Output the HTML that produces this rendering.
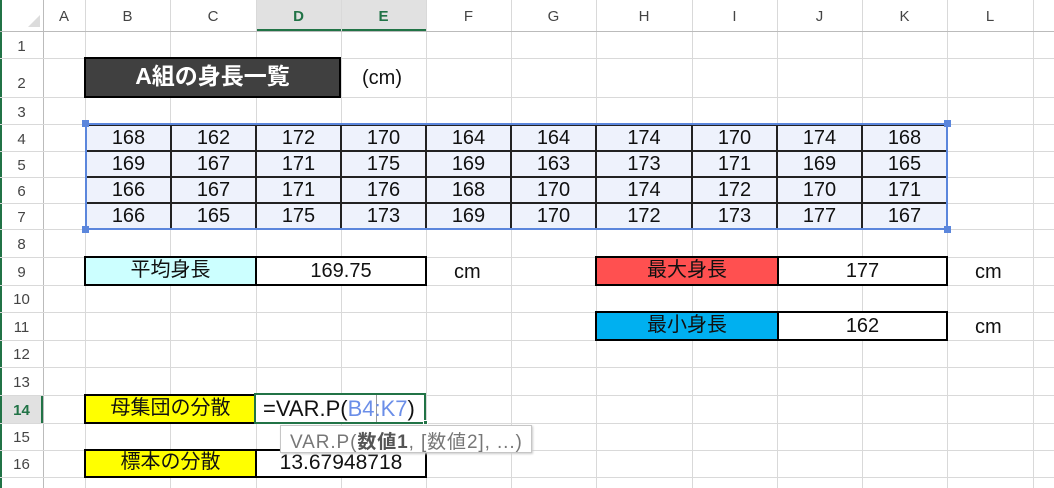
<!DOCTYPE html>
<html><head><meta charset="utf-8"><style>
*{margin:0;padding:0;box-sizing:border-box}
body{width:1054px;height:488px;overflow:hidden;background:#fff;position:relative;font-family:"Liberation Sans","Noto Sans CJK JP",sans-serif;color:#111}
.a{position:absolute}
.v{position:absolute;top:0;width:1px;height:488px;background:#d9d9d9}
.h{position:absolute;left:0;height:1px;width:1054px;background:#d9d9d9}
.ch{position:absolute;top:0;height:31px;text-align:center;line-height:34px;font-size:15px;color:#444}
.rh{position:absolute;left:0;width:43px;text-align:center;font-size:15px;color:#444;padding-left:0}
.box{position:absolute;border:2px solid #000;display:flex;align-items:center;justify-content:center;font-size:20px;line-height:24px}
.j{padding-bottom:3px}
table{position:absolute;left:85px;top:124px;border-collapse:collapse;background:#eef2fc}
td{border:2px solid #222;width:85px;height:26px;text-align:center;font-size:20px;line-height:22px;padding:0}
</style></head><body>
<div class="a" style="left:0;top:0;width:1054px;height:31px;background:#fff"></div>
<div class="a" style="left:256px;top:0;width:170px;height:31px;background:#e1e1e1"></div>
<div class="a" style="left:256px;top:29px;width:170px;height:2px;background:#217346"></div>
<div class="a" style="left:0;top:395px;width:43px;height:28px;background:#e1e1e1"></div>
<div class="a" style="left:41px;top:395px;width:2px;height:28px;background:#217346"></div>
<div class="a" style="left:0;top:0;width:2px;height:488px;background:#217346"></div>
<div class="v" style="left:43px;background:#bbb"></div>
<div class="v" style="left:85px"></div><div class="v" style="left:170px"></div><div class="v" style="left:256px"></div><div class="v" style="left:341px"></div><div class="v" style="left:426px"></div><div class="v" style="left:511px"></div><div class="v" style="left:596px"></div><div class="v" style="left:692px"></div><div class="v" style="left:777px"></div><div class="v" style="left:862px"></div><div class="v" style="left:947px"></div><div class="v" style="left:1033px"></div>
<div class="h" style="top:31px;background:#bbb"></div>
<div class="h" style="top:58px"></div><div class="h" style="top:97px"></div><div class="h" style="top:124px"></div><div class="h" style="top:151px"></div><div class="h" style="top:177px"></div><div class="h" style="top:203px"></div><div class="h" style="top:229px"></div><div class="h" style="top:257px"></div><div class="h" style="top:285px"></div><div class="h" style="top:312px"></div><div class="h" style="top:340px"></div><div class="h" style="top:367px"></div><div class="h" style="top:395px"></div><div class="h" style="top:423px"></div><div class="h" style="top:450px"></div><div class="h" style="top:477px"></div>
<div class="a" style="left:28px;top:15px;width:0;height:0;border-left:12px solid transparent;border-bottom:12px solid #dcdcdc"></div>
<div class="ch" style="left:43px;width:42px">A</div><div class="ch" style="left:85px;width:85px">B</div><div class="ch" style="left:170px;width:86px">C</div><div class="ch" style="left:256px;width:85px;color:#217346;font-weight:bold">D</div><div class="ch" style="left:341px;width:85px;color:#217346;font-weight:bold">E</div><div class="ch" style="left:426px;width:85px">F</div><div class="ch" style="left:511px;width:85px">G</div><div class="ch" style="left:596px;width:96px">H</div><div class="ch" style="left:692px;width:85px">I</div><div class="ch" style="left:777px;width:85px">J</div><div class="ch" style="left:862px;width:85px">K</div><div class="ch" style="left:947px;width:86px">L</div>
<div class="rh" style="top:38px">1</div><div class="rh" style="top:75px">2</div><div class="rh" style="top:104px">3</div><div class="rh" style="top:131px">4</div><div class="rh" style="top:157px">5</div><div class="rh" style="top:183px">6</div><div class="rh" style="top:209px">7</div><div class="rh" style="top:236px">8</div><div class="rh" style="top:264px">9</div><div class="rh" style="top:291px">10</div><div class="rh" style="top:319px">11</div><div class="rh" style="top:346px">12</div><div class="rh" style="top:374px">13</div><div class="rh" style="top:402px;color:#217346;font-weight:bold">14</div><div class="rh" style="top:429px">15</div><div class="rh" style="top:456px">16</div>
<div class="box j" style="left:84px;top:57px;width:257px;height:41px;background:#404040;color:#fff;font-weight:bold;font-size:23px">A組の身長一覧</div>
<div class="a" style="left:362px;top:67px;font-size:20px">(cm)</div>
<table>
<tr><td>168</td><td>162</td><td>172</td><td>170</td><td>164</td><td>164</td><td style="width:96px">174</td><td>170</td><td>174</td><td>168</td></tr>
<tr><td>169</td><td>167</td><td>171</td><td>175</td><td>169</td><td>163</td><td style="width:96px">173</td><td>171</td><td>169</td><td>165</td></tr>
<tr><td>166</td><td>167</td><td>171</td><td>176</td><td>168</td><td>170</td><td style="width:96px">174</td><td>172</td><td>170</td><td>171</td></tr>
<tr><td>166</td><td>165</td><td>175</td><td>173</td><td>169</td><td>170</td><td style="width:96px">172</td><td>173</td><td>177</td><td>167</td></tr>
</table>
<div class="a" style="left:85px;top:123px;width:863px;height:107px;border:2px solid #5b86dc"></div>
<div class="a" style="left:82px;top:120px;width:7px;height:7px;background:#5b86dc"></div>
<div class="a" style="left:944px;top:120px;width:7px;height:7px;background:#5b86dc"></div>
<div class="a" style="left:82px;top:226px;width:7px;height:7px;background:#5b86dc"></div>
<div class="a" style="left:944px;top:226px;width:7px;height:7px;background:#5b86dc"></div>
<div class="box j" style="left:84px;top:256px;width:173px;height:30px;background:#ccffff">平均身長</div>
<div class="box" style="left:255px;top:256px;width:172px;height:30px;background:#fff">169.75</div>
<div class="a" style="left:454px;top:261px;font-size:20px">cm</div>
<div class="box j" style="left:595px;top:256px;width:184px;height:30px;background:#ff5050">最大身長</div>
<div class="box" style="left:777px;top:256px;width:171px;height:30px;background:#fff">177</div>
<div class="a" style="left:975px;top:261px;font-size:20px">cm</div>
<div class="box j" style="left:595px;top:311px;width:184px;height:30px;background:#00b0f0">最小身長</div>
<div class="box" style="left:777px;top:311px;width:171px;height:30px;background:#fff">162</div>
<div class="a" style="left:975px;top:316px;font-size:20px">cm</div>
<div class="box j" style="left:84px;top:394px;width:173px;height:30px;background:#ffff00">母集団の分散</div>
<div class="a" style="left:254px;top:393px;width:172px;height:31px;border:2px solid #217346;background:#fff"></div>
<div class="a" style="left:376px;top:395px;width:1px;height:27px;background:#999"></div>
<div class="a" style="left:423px;top:420px;width:5px;height:5px;background:#217346;border:1px solid #fff"></div>
<div class="a" style="left:263px;top:396px;font-size:22px;white-space:nowrap">=VAR.P(<span style="color:#6b8ee8">B4</span><span style="color:#6b8ee8">:K7</span>)</div>
<div class="box j" style="left:84px;top:449px;width:173px;height:29px;background:#ffff00">標本の分散</div>
<div class="box" style="left:255px;top:449px;width:172px;height:29px;background:#fff;align-items:flex-start;font-size:21px">13.67948718</div>
<div class="a" style="left:280px;top:425px;width:252px;height:28px;background:#fff;border:1px solid #c6c6c6;box-shadow:1px 1px 2px #ccc;font-size:19px;color:#777;padding:1px 0 0 9px;white-space:nowrap;letter-spacing:0.9px">VAR.P(<b style="color:#555">数値1</b>, [数値2], ...)</div>
</body></html>
